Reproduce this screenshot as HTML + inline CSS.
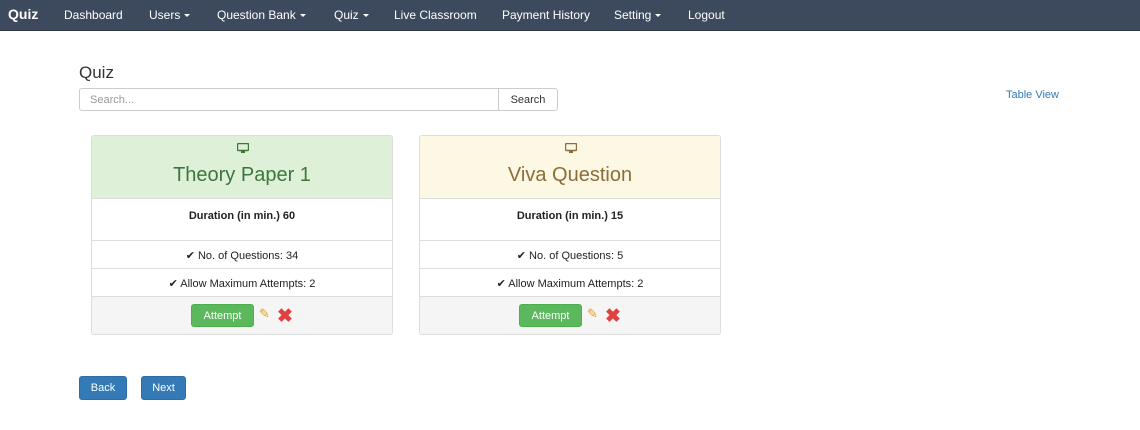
<!DOCTYPE html>
<html><head><style>
*{box-sizing:border-box}
body{margin:0;width:1140px;height:430px;background:#fff;font-family:"Liberation Sans",sans-serif;font-size:11px;color:#333;position:relative;overflow:hidden}
.nav{position:absolute;left:0;top:0;width:1140px;height:31px;background:#3d4a5d;border-bottom:1px solid #2e3846}
.nav span{position:absolute;top:8px;color:#fff;font-size:12px}
.car{display:inline-block;border-left:3px solid transparent;border-right:3px solid transparent;border-top:3px solid #fff;vertical-align:middle;margin-left:4px}
.abs{position:absolute}
.card{position:absolute;top:135px;width:302px;height:200px;border:1px solid #ddd;border-radius:3px;overflow:hidden}
.hd{height:63px;text-align:center;border-bottom:1px solid #ddd}
.hd .t{font-size:20px;position:absolute;top:28px;left:0;right:0;text-align:center}
.row{position:absolute;left:0;right:0;text-align:center;border-bottom:1px solid #ddd;color:#222}
.ft{position:absolute;left:0;right:0;top:161px;bottom:0;background:#f5f5f5}
.btn{position:absolute;color:#fff;font-size:11px;text-align:center;border-radius:3px}
</style></head><body>
<div class="nav">
<span style="left:8px;font-size:14px;top:6px;font-weight:bold">Quiz</span>
<span style="left:64px">Dashboard</span>
<span style="left:149px">Users<i class="car"></i></span>
<span style="left:217px">Question Bank<i class="car"></i></span>
<span style="left:334px">Quiz<i class="car"></i></span>
<span style="left:394px">Live Classroom</span>
<span style="left:502px">Payment History</span>
<span style="left:614px">Setting<i class="car"></i></span>
<span style="left:688px">Logout</span>
</div>
<div class="abs" style="left:79px;top:63px;font-size:17px">Quiz</div>
<div class="abs" style="left:79px;top:88px;width:420px;height:23px;border:1px solid #ccc;border-radius:3px 0 0 3px;padding:5px 10px;color:#999;font-size:11px">Search...</div>
<div class="abs" style="left:498px;top:88px;width:60px;height:23px;border:1px solid #ccc;border-radius:0 3px 3px 0;text-align:center;padding-top:5px;font-size:11px">Search</div>
<div class="abs" style="left:1006px;top:89px;color:#337ab7;font-size:11px">Table View</div>

<div class="card" style="left:91px">
<div class="hd" style="background:#dff0d8;color:#3c763d">
<svg class="abs" style="left:145px;top:7px" width="12" height="10" viewBox="0 0 12 10"><rect x="0.5" y="0.5" width="11" height="7" rx="1" fill="none" stroke="#3c763d" stroke-width="1.4"/><rect x="4" y="8" width="4" height="2" fill="#3c763d"/></svg>
<div class="t">Theory Paper 1</div></div>
<div class="row" style="top:63px;height:42px;padding-top:11px;font-weight:bold">Duration (in min.) 60</div>
<div class="row" style="top:105px;height:28px;padding-top:8px">&#10004; No. of Questions: 34</div>
<div class="row" style="top:133px;height:28px;padding-top:8px">&#10004; Allow Maximum Attempts: 2</div>
<div class="ft"><div class="btn" style="left:99px;top:7px;width:63px;height:23px;background:#5cb85c;border:1px solid #4cae4c;padding-top:5px">Attempt</div>
<span class="abs" style="left:167px;top:9px;color:#e0a030;font-size:13px">&#9998;</span>
<span class="abs" style="left:185px;top:8px;color:#e04040;font-size:19px;font-weight:bold">&#10006;</span></div>
</div>

<div class="card" style="left:419px">
<div class="hd" style="background:#fcf8e3;color:#8a6d3b">
<svg class="abs" style="left:145px;top:7px" width="12" height="10" viewBox="0 0 12 10"><rect x="0.5" y="0.5" width="11" height="7" rx="1" fill="none" stroke="#8a6d3b" stroke-width="1.4"/><rect x="4" y="8" width="4" height="2" fill="#8a6d3b"/></svg>
<div class="t">Viva Question</div></div>
<div class="row" style="top:63px;height:42px;padding-top:11px;font-weight:bold">Duration (in min.) 15</div>
<div class="row" style="top:105px;height:28px;padding-top:8px">&#10004; No. of Questions: 5</div>
<div class="row" style="top:133px;height:28px;padding-top:8px">&#10004; Allow Maximum Attempts: 2</div>
<div class="ft"><div class="btn" style="left:99px;top:7px;width:63px;height:23px;background:#5cb85c;border:1px solid #4cae4c;padding-top:5px">Attempt</div>
<span class="abs" style="left:167px;top:9px;color:#e0a030;font-size:13px">&#9998;</span>
<span class="abs" style="left:185px;top:8px;color:#e04040;font-size:19px;font-weight:bold">&#10006;</span></div>
</div>

<div class="btn" style="left:79px;top:376px;width:48px;height:24px;background:#337ab7;border:1px solid #2e6da4;padding-top:5px">Back</div>
<div class="btn" style="left:141px;top:376px;width:45px;height:24px;background:#337ab7;border:1px solid #2e6da4;padding-top:5px">Next</div>
</body></html>
